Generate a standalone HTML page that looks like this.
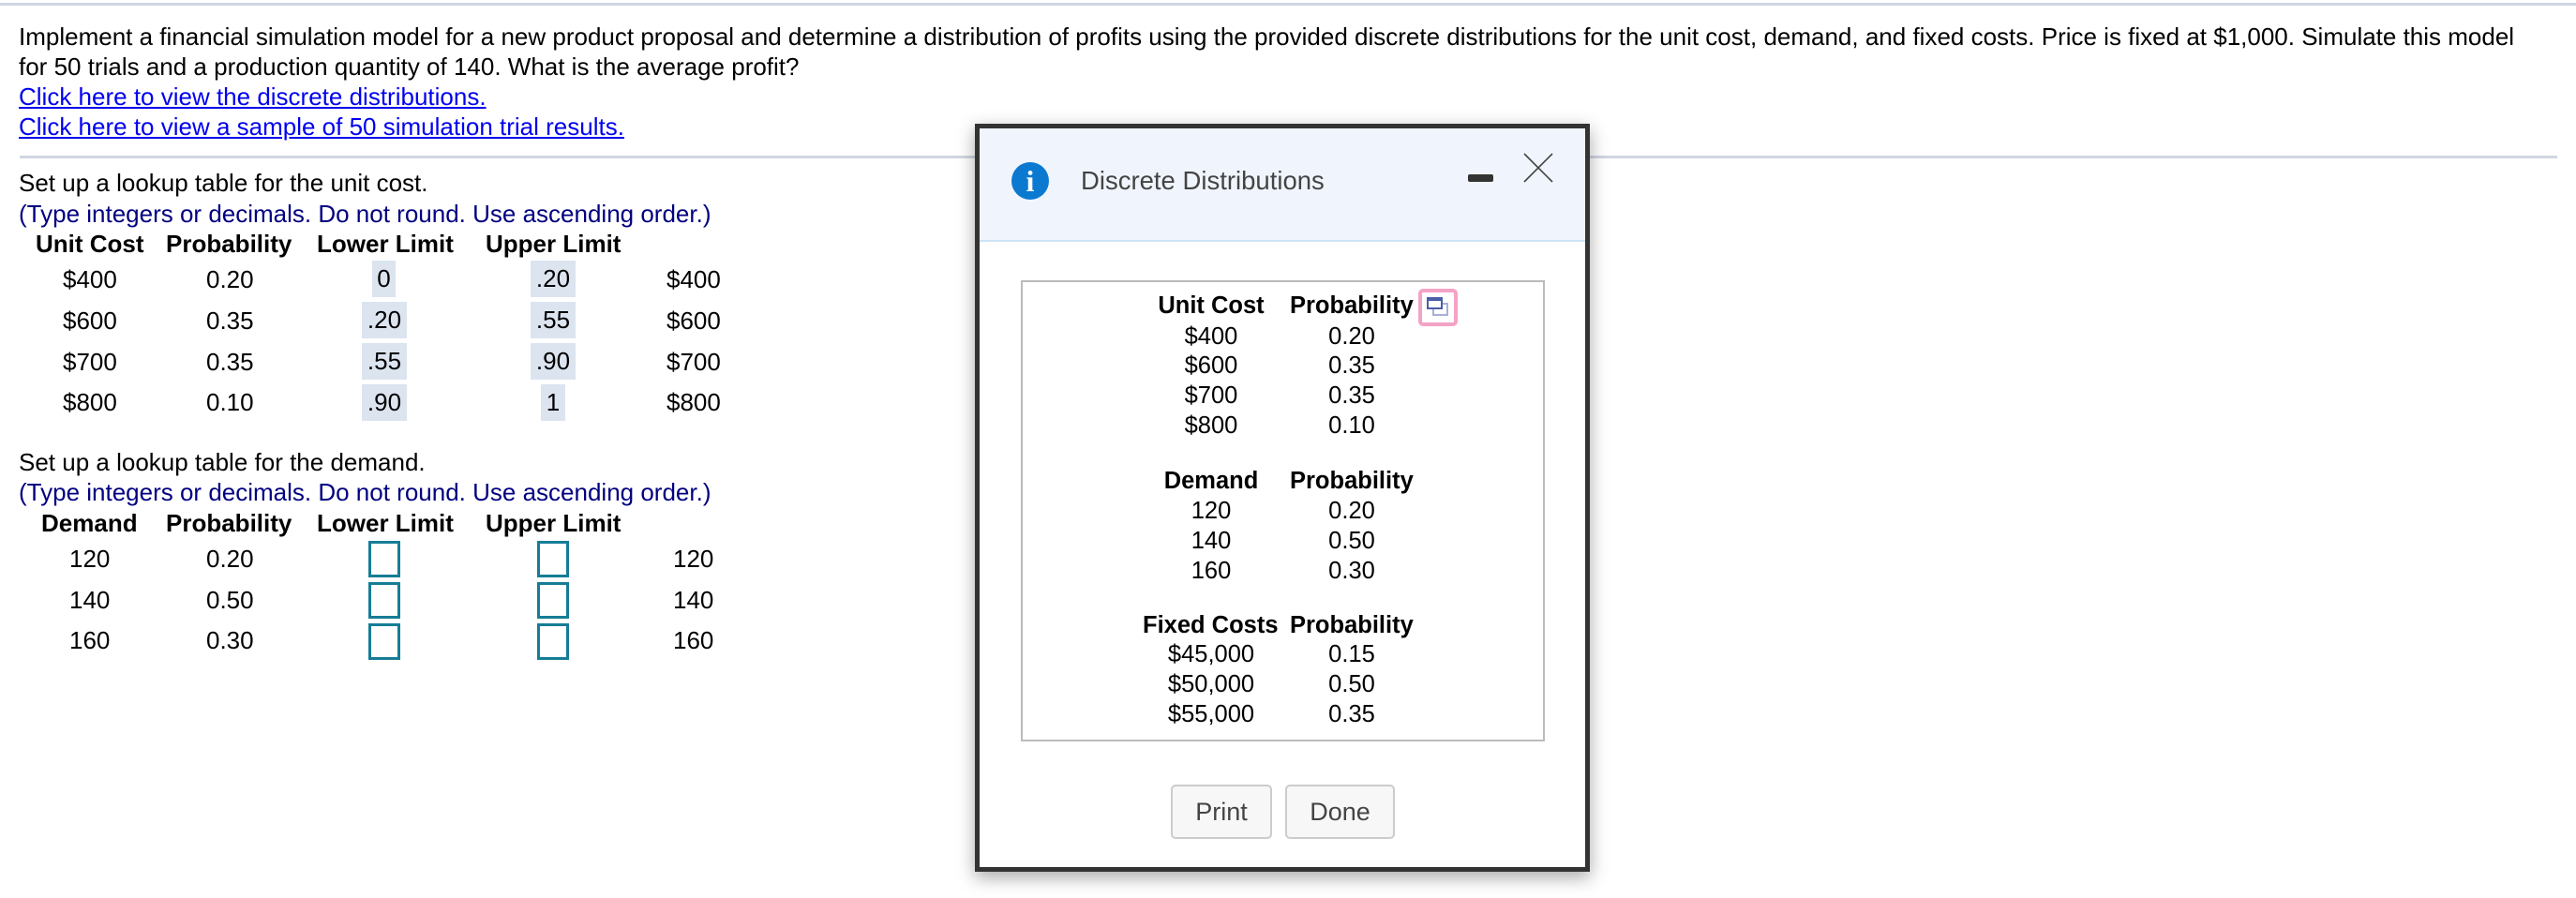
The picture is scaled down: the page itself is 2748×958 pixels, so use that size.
<!DOCTYPE html>
<html><head><meta charset="utf-8"><style>
*{margin:0;padding:0;box-sizing:border-box}
body{width:2748px;height:958px;background:#fff;position:relative;overflow:hidden;font-family:"Liberation Sans",Arial,sans-serif;font-size:26px;color:#000}
.t{position:absolute;line-height:32px;white-space:nowrap}
.d .t{font-size:25.5px}
.c{text-align:center}
.b{font-weight:bold}
.hr{position:absolute;height:3px;background:#d0d6e2}
a{color:#0000ee;text-decoration:underline}
.blue{color:#000080}
.ib{position:absolute;background:#dce4f0;line-height:39px;text-align:center;height:39px}
.box{position:absolute;border:3px solid #167d96;width:34px;height:39px;background:#fff}
</style></head><body>
<div class="hr" style="left:0;top:3px;width:2748px"></div>
<div class="t" style="left:20px;top:23px">Implement a financial simulation model for a new product proposal and determine a distribution of profits using the provided discrete distributions for the unit cost, demand, and fixed costs. Price is fixed at $1,000. Simulate this model</div>
<div class="t" style="left:20px;top:55px">for 50 trials and a production quantity of 140. What is the average profit?</div>
<div class="t" style="left:20px;top:87px"><a>Click here to view the discrete distributions.</a></div>
<div class="t" style="left:20px;top:119px"><a>Click here to view a sample of 50 simulation trial results.</a></div>
<div class="hr" style="left:21px;top:166px;width:2707px"></div>

<div class="t" style="left:20px;top:179px">Set up a lookup table for the unit cost.</div>
<div class="t blue" style="left:20px;top:212px">(Type integers or decimals. Do not round. Use ascending order.)</div>
<div class="t b" style="left:38px;top:244px">Unit Cost</div>
<div class="t b" style="left:177px;top:244px">Probability</div>
<div class="t b" style="left:338px;top:244px">Lower Limit</div>
<div class="t b" style="left:518px;top:244px">Upper Limit</div>

<div class="t" style="left:67px;top:282px">$400</div><div class="t" style="left:220px;top:282px">0.20</div>
<div class="ib" style="left:397px;top:278px;width:25px">0</div><div class="ib" style="left:566px;top:278px;width:48px">.20</div>
<div class="t" style="left:711px;top:282px">$400</div>
<div class="t" style="left:67px;top:326px">$600</div><div class="t" style="left:220px;top:326px">0.35</div>
<div class="ib" style="left:386px;top:322px;width:48px">.20</div><div class="ib" style="left:566px;top:322px;width:48px">.55</div>
<div class="t" style="left:711px;top:326px">$600</div>
<div class="t" style="left:67px;top:370px">$700</div><div class="t" style="left:220px;top:370px">0.35</div>
<div class="ib" style="left:386px;top:366px;width:48px">.55</div><div class="ib" style="left:566px;top:366px;width:48px">.90</div>
<div class="t" style="left:711px;top:370px">$700</div>
<div class="t" style="left:67px;top:413px">$800</div><div class="t" style="left:220px;top:413px">0.10</div>
<div class="ib" style="left:386px;top:410px;width:48px">.90</div><div class="ib" style="left:577px;top:410px;width:26px">1</div>
<div class="t" style="left:711px;top:413px">$800</div>

<div class="t" style="left:20px;top:477px">Set up a lookup table for the demand.</div>
<div class="t blue" style="left:20px;top:509px">(Type integers or decimals. Do not round. Use ascending order.)</div>
<div class="t b" style="left:44px;top:542px">Demand</div>
<div class="t b" style="left:177px;top:542px">Probability</div>
<div class="t b" style="left:338px;top:542px">Lower Limit</div>
<div class="t b" style="left:518px;top:542px">Upper Limit</div>
<div class="t" style="left:74px;top:580px">120</div><div class="t" style="left:220px;top:580px">0.20</div><div class="t" style="left:718px;top:580px">120</div>
<div class="t" style="left:74px;top:624px">140</div><div class="t" style="left:220px;top:624px">0.50</div><div class="t" style="left:718px;top:624px">140</div>
<div class="t" style="left:74px;top:667px">160</div><div class="t" style="left:220px;top:667px">0.30</div><div class="t" style="left:718px;top:667px">160</div>
<div class="box" style="left:393px;top:577px"></div><div class="box" style="left:573px;top:577px"></div>
<div class="box" style="left:393px;top:621px"></div><div class="box" style="left:573px;top:621px"></div>
<div class="box" style="left:393px;top:665px"></div><div class="box" style="left:573px;top:665px"></div>

<!-- dialog -->
<div style="position:absolute;left:1040px;top:132px;width:656px;height:798px;border:5px solid #333;background:#fff;box-shadow:0 6px 18px rgba(0,0,0,0.35)">
  <div style="position:absolute;left:0;top:0;width:646px;height:121px;background:#f0f5fd;border-bottom:2px solid #cde3f6"></div>
</div>
<div class="d">
<div style="position:absolute;left:1079px;top:173px;width:40px;height:40px;border-radius:50%;background:#0b79d0;color:#fff;font-family:'Liberation Serif',serif;font-weight:bold;font-size:32px;line-height:40px;text-align:center">i</div>
<div class="t" style="left:1153px;top:177px;font-size:27.5px;color:#444">Discrete Distributions</div>
<div style="position:absolute;left:1566px;top:186px;width:27px;height:8px;background:#333;border-radius:2px"></div>
<svg style="position:absolute;left:1624px;top:162px" width="34" height="34"><path d="M2 2L32 32M32 2L2 32" stroke="#444" stroke-width="1.6"/></svg>

<div style="position:absolute;left:1089px;top:299px;width:559px;height:492px;border:2px solid #bbb"></div>
<div class="t b c" style="left:1222px;top:310px;width:140px">Unit Cost</div>
<div class="t b" style="left:1376px;top:310px">Probability</div>
<div style="position:absolute;left:1513px;top:308px;width:42px;height:40px;border:4px solid #f4a3c6;border-radius:5px;background:#fff"></div>
<svg style="position:absolute;left:1520px;top:314px" width="28" height="28"><rect x="9" y="10" width="15" height="12" fill="none" stroke="#a8b0d8" stroke-width="2"/><rect x="3" y="4" width="15" height="11" fill="#fff" stroke="#4a5ea8" stroke-width="2"/><rect x="3" y="4" width="15" height="3" fill="#4a5ea8"/></svg>
<div class="t c" style="left:1222px;top:343px;width:140px">$400</div><div class="t c" style="left:1372px;top:343px;width:140px">0.20</div>
<div class="t c" style="left:1222px;top:374px;width:140px">$600</div><div class="t c" style="left:1372px;top:374px;width:140px">0.35</div>
<div class="t c" style="left:1222px;top:406px;width:140px">$700</div><div class="t c" style="left:1372px;top:406px;width:140px">0.35</div>
<div class="t c" style="left:1222px;top:438px;width:140px">$800</div><div class="t c" style="left:1372px;top:438px;width:140px">0.10</div>

<div class="t b c" style="left:1222px;top:497px;width:140px">Demand</div>
<div class="t b" style="left:1376px;top:497px">Probability</div>
<div class="t c" style="left:1222px;top:529px;width:140px">120</div><div class="t c" style="left:1372px;top:529px;width:140px">0.20</div>
<div class="t c" style="left:1222px;top:561px;width:140px">140</div><div class="t c" style="left:1372px;top:561px;width:140px">0.50</div>
<div class="t c" style="left:1222px;top:593px;width:140px">160</div><div class="t c" style="left:1372px;top:593px;width:140px">0.30</div>

<div class="t b" style="left:1219px;top:651px">Fixed Costs</div>
<div class="t b" style="left:1376px;top:651px">Probability</div>
<div class="t c" style="left:1222px;top:682px;width:140px">$45,000</div><div class="t c" style="left:1372px;top:682px;width:140px">0.15</div>
<div class="t c" style="left:1222px;top:714px;width:140px">$50,000</div><div class="t c" style="left:1372px;top:714px;width:140px">0.50</div>
<div class="t c" style="left:1222px;top:746px;width:140px">$55,000</div><div class="t c" style="left:1372px;top:746px;width:140px">0.35</div>
</div>
<div style="position:absolute;left:1249px;top:837px;width:108px;height:58px;border:2px solid #ccc;border-radius:5px;background:#f7f7f7;color:#444;font-size:27px;line-height:54px;text-align:center">Print</div>
<div style="position:absolute;left:1371px;top:837px;width:117px;height:58px;border:2px solid #ccc;border-radius:5px;background:#f7f7f7;color:#444;font-size:27px;line-height:54px;text-align:center">Done</div>
</body></html>
